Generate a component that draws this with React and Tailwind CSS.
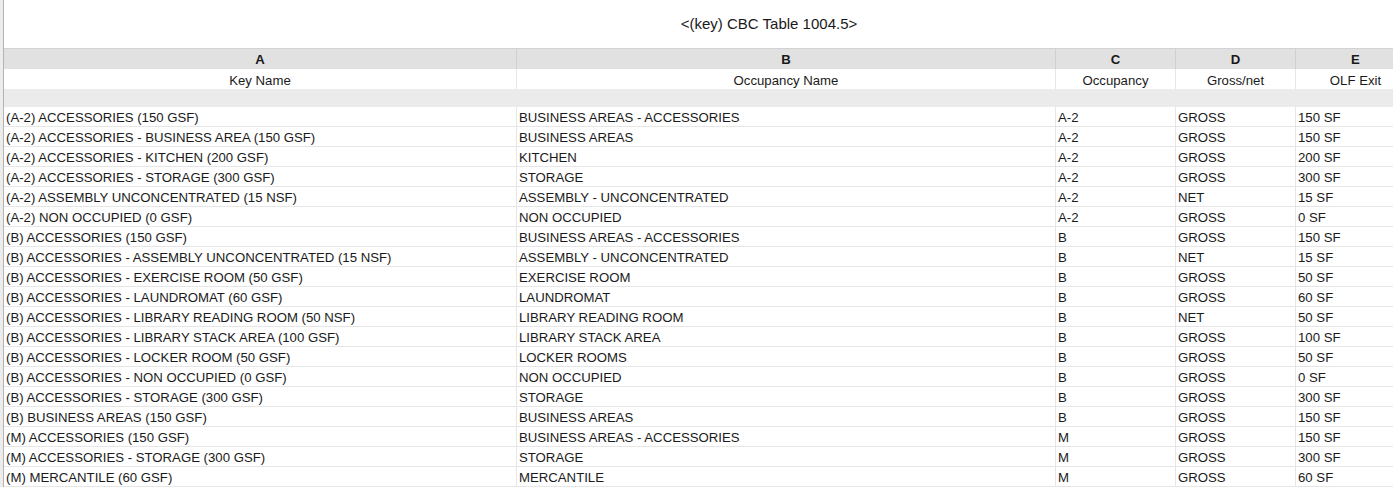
import React from 'react';

const rows = [
  ['(A-2) ACCESSORIES (150 GSF)', 'BUSINESS AREAS - ACCESSORIES', 'A-2', 'GROSS', '150 SF'],
  ['(A-2) ACCESSORIES - BUSINESS AREA (150 GSF)', 'BUSINESS AREAS', 'A-2', 'GROSS', '150 SF'],
  ['(A-2) ACCESSORIES - KITCHEN (200 GSF)', 'KITCHEN', 'A-2', 'GROSS', '200 SF'],
  ['(A-2) ACCESSORIES - STORAGE (300 GSF)', 'STORAGE', 'A-2', 'GROSS', '300 SF'],
  ['(A-2) ASSEMBLY UNCONCENTRATED (15 NSF)', 'ASSEMBLY - UNCONCENTRATED', 'A-2', 'NET', '15 SF'],
  ['(A-2) NON OCCUPIED (0 GSF)', 'NON OCCUPIED', 'A-2', 'GROSS', '0 SF'],
  ['(B) ACCESSORIES (150 GSF)', 'BUSINESS AREAS - ACCESSORIES', 'B', 'GROSS', '150 SF'],
  ['(B) ACCESSORIES - ASSEMBLY UNCONCENTRATED (15 NSF)', 'ASSEMBLY - UNCONCENTRATED', 'B', 'NET', '15 SF'],
  ['(B) ACCESSORIES - EXERCISE ROOM (50 GSF)', 'EXERCISE ROOM', 'B', 'GROSS', '50 SF'],
  ['(B) ACCESSORIES - LAUNDROMAT (60 GSF)', 'LAUNDROMAT', 'B', 'GROSS', '60 SF'],
  ['(B) ACCESSORIES - LIBRARY READING ROOM (50 NSF)', 'LIBRARY READING ROOM', 'B', 'NET', '50 SF'],
  ['(B) ACCESSORIES - LIBRARY STACK AREA (100 GSF)', 'LIBRARY STACK AREA', 'B', 'GROSS', '100 SF'],
  ['(B) ACCESSORIES - LOCKER ROOM (50 GSF)', 'LOCKER ROOMS', 'B', 'GROSS', '50 SF'],
  ['(B) ACCESSORIES - NON OCCUPIED (0 GSF)', 'NON OCCUPIED', 'B', 'GROSS', '0 SF'],
  ['(B) ACCESSORIES - STORAGE (300 GSF)', 'STORAGE', 'B', 'GROSS', '300 SF'],
  ['(B) BUSINESS AREAS (150 GSF)', 'BUSINESS AREAS', 'B', 'GROSS', '150 SF'],
  ['(M) ACCESSORIES (150 GSF)', 'BUSINESS AREAS - ACCESSORIES', 'M', 'GROSS', '150 SF'],
  ['(M) ACCESSORIES - STORAGE (300 GSF)', 'STORAGE', 'M', 'GROSS', '300 SF'],
  ['(M) MERCANTILE (60 GSF)', 'MERCANTILE', 'M', 'GROSS', '60 SF'],
];

const widths = ['w-[512px]', 'w-[539px]', 'w-[120px]', 'w-[120px]', 'w-[120px]'];
const letters = ['A', 'B', 'C', 'D', 'E'];
const names = ['Key Name', 'Occupancy Name', 'Occupancy', 'Gross/net', 'OLF Exit'];

export default function App() {
  return (
    <div className="h-[487px] w-[1393px] overflow-hidden bg-white flex font-['Liberation_Sans',Arial,sans-serif] text-[13.2px] leading-[16px] text-[#1a1a1a]">
      <div className="w-[3px] shrink-0 bg-[#ececec]" />
      <div className="w-px shrink-0 bg-[#b4b4b4]" />
      <div className="flex flex-col shrink-0">
        <div className="h-[48px] w-[1530px] flex items-center justify-center text-[15px]">
          &lt;(key) CBC Table 1004.5&gt;
        </div>
        <div className="flex h-[22px] bg-[#e1e1e1] border-t border-[#d2d2d2]">
          {letters.map((l, i) => (
            <div key={l} className={`${widths[i]} shrink-0 flex items-center justify-center font-bold pt-[2px] ${i > 0 ? 'border-l border-[#d0d0d0]' : ''}`}>
              {l}
            </div>
          ))}
        </div>
        <div className="flex h-[20px] bg-white">
          {names.map((n, i) => (
            <div key={n} className={`${widths[i]} shrink-0 flex items-center justify-center pt-[3px] ${i > 0 ? 'border-l border-[#e6e6e6]' : ''}`}>
              {n}
            </div>
          ))}
        </div>
        <div className="h-[18px] bg-[#ebebeb]" />
        {rows.map((r, ri) => (
          <div key={ri} className="flex h-[20px] border-b border-[#e6e6e6]">
            {r.map((c, i) => (
              <div key={i} className={`${widths[i]} shrink-0 flex items-center pl-[2px] pt-[3px] whitespace-nowrap ${i > 0 ? 'border-l border-[#e6e6e6]' : ''}`}>
                {c}
              </div>
            ))}
          </div>
        ))}
      </div>
    </div>
  );
}
